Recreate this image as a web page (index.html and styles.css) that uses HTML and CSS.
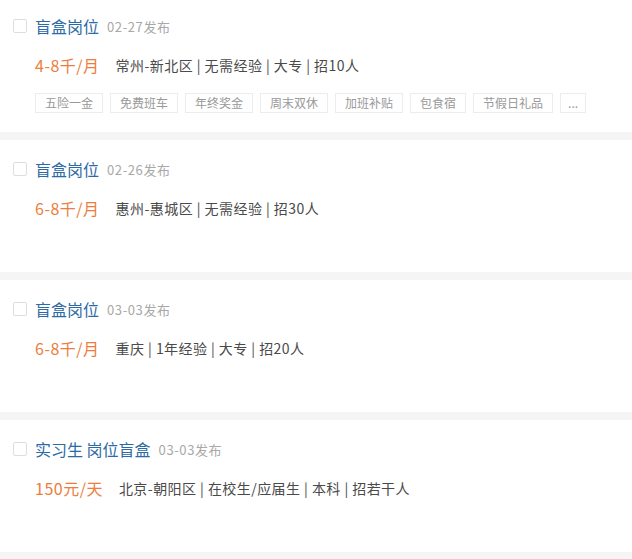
FILE: index.html
```html
<!DOCTYPE html>
<html lang="zh-CN">
<head>
<meta charset="utf-8">
<link rel="stylesheet" href="styles.css">
</head>
<body>
<div class="list">
  <div class="card first">
    <div class="row head">
      <span class="check"></span>
      <span class="title">盲盒岗位</span>
      <span class="date">02-27发布</span>
    </div>
    <div class="row info">
      <span class="salary">4-8千/月</span>
      <span class="meta">常州-新北区 | 无需经验 | 大专 | 招10人</span>
    </div>
    <div class="tags">
      <span class="tag">五险一金</span>
      <span class="tag">免费班车</span>
      <span class="tag">年终奖金</span>
      <span class="tag">周末双休</span>
      <span class="tag">加班补贴</span>
      <span class="tag">包食宿</span>
      <span class="tag">节假日礼品</span>
      <span class="tag more">...</span>
    </div>
  </div>
  <div class="card">
    <div class="row head">
      <span class="check"></span>
      <span class="title">盲盒岗位</span>
      <span class="date">02-26发布</span>
    </div>
    <div class="row info">
      <span class="salary">6-8千/月</span>
      <span class="meta">惠州-惠城区 | 无需经验 | 招30人</span>
    </div>
  </div>
  <div class="card">
    <div class="row head">
      <span class="check"></span>
      <span class="title">盲盒岗位</span>
      <span class="date">03-03发布</span>
    </div>
    <div class="row info">
      <span class="salary">6-8千/月</span>
      <span class="meta">重庆 | 1年经验 | 大专 | 招20人</span>
    </div>
  </div>
  <div class="card">
    <div class="row head">
      <span class="check"></span>
      <span class="title">实习生 岗位盲盒</span>
      <span class="date">03-03发布</span>
    </div>
    <div class="row info">
      <span class="salary">150元/天</span>
      <span class="meta">北京-朝阳区 | 在校生/应届生 | 本科 | 招若干人</span>
    </div>
  </div>
</div>
</body>
</html>
```
FILE: styles.css
```css
html, body {
  margin: 0;
  padding: 0;
  background: #f5f5f5;
  font-family: "Noto Sans CJK SC", "Noto Sans", sans-serif;
}
.list {
  display: flex;
  flex-direction: column;
  gap: 8px;
}
.card {
  background: #fff;
  height: 132px;
  box-sizing: border-box;
  padding: 19px 0 0 13px;
}
.card.first {
  margin-top: -3px;
  height: 135px;
}
.row {
  display: flex;
  align-items: center;
  height: 20px;
}
.check {
  width: 12px;
  height: 12px;
  border: 1px solid #dedede;
  border-radius: 2px;
  margin-right: 8px;
  flex: none;
}
.title {
  font-size: 16px;
  color: #2c6aa6;
  margin-right: 8px;
}
.date {
  font-size: 13px;
  color: #a8a8a8;
  letter-spacing: 0.6px;
}
.info {
  margin-top: 19px;
  padding-left: 22px;
}
.salary {
  font-size: 16px;
  color: #ec7d3c;
  letter-spacing: 0.5px;
  margin-right: 16px;
}
.meta {
  font-size: 14px;
  color: #4a4a4a;
  letter-spacing: 0.45px;
}
.tags {
  display: flex;
  gap: 7px;
  margin-top: 18px;
  padding-left: 22px;
}
.tag {
  box-sizing: border-box;
  height: 20px;
  line-height: 18px;
  padding: 0 9px;
  border: 1px solid #ececec;
  font-size: 12px;
  color: #999;
}
.tag.more {
  padding: 0 7px;
}
```
